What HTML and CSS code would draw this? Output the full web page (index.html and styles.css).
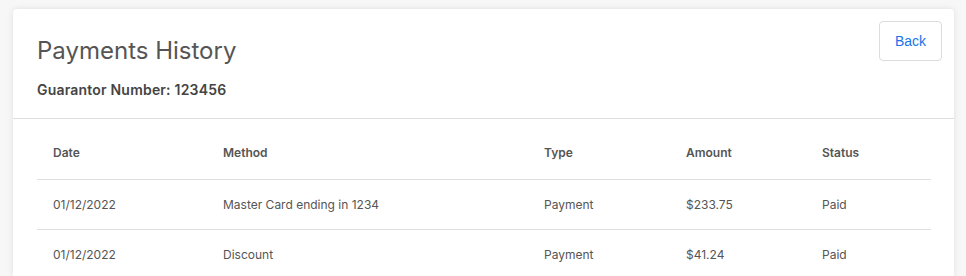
FILE: index.html
```html
<!DOCTYPE html>
<html>
<head>
<meta charset="utf-8">
<link rel="stylesheet" href="styles.css">
</head>
<body>
<div class="card">
  <div class="card-header">
    <div class="heading">
      <h1 class="title">Payments History</h1>
      <div class="subtitle">Guarantor Number: 123456</div>
    </div>
    <button class="back-btn">Back</button>
  </div>
  <div class="card-body">
    <table class="history">
      <thead>
        <tr><th class="c-date">Date</th><th class="c-method">Method</th><th class="c-type">Type</th><th class="c-amount">Amount</th><th class="c-status">Status</th></tr>
      </thead>
      <tbody>
        <tr><td>01/12/2022</td><td>Master Card ending in 1234</td><td>Payment</td><td>$233.75</td><td>Paid</td></tr>
        <tr><td>01/12/2022</td><td>Discount</td><td>Payment</td><td>$41.24</td><td>Paid</td></tr>
      </tbody>
    </table>
  </div>
</div>
</body>
</html>
```

FILE: styles.css
```css
html, body {
  margin: 0;
  padding: 0;
  background: #f7f7f7;
  font-family: "Inter", "Noto Sans", sans-serif;
  color: #555;
}
body {
  padding: 9px 12px 0 13px;
  overflow: hidden;
  height: 276px;
  box-sizing: border-box;
}
.card {
  background: #fff;
  border-radius: 4px 4px 0 0;
  box-shadow: 0 0 6px rgba(0, 0, 0, 0.10);
  height: 267px;
  overflow: hidden;
}
.card-header {
  display: flex;
  justify-content: space-between;
  align-items: flex-start;
  padding: 12px 12px 0 24px;
  height: 110px;
  box-sizing: border-box;
  border-bottom: 1px solid #dedede;
}
.heading {
  padding-top: 15px;
}
.title {
  margin: 0;
  font-size: 24px;
  font-weight: 400;
  line-height: 30px;
  color: #555;
}
.subtitle {
  margin-top: 15px;
  font-size: 14px;
  font-weight: 600;
  color: #444;
  line-height: 18px;
  letter-spacing: 0.2px;
}
.back-btn {
  width: 63px;
  height: 40px;
  background: #fff;
  border: 1px solid #dcdcdc;
  border-radius: 4px;
  color: #1a73e8;
  font-family: "Liberation Sans", Arial, sans-serif;
  font-size: 14px;
  padding: 0;
}
.card-body {
  padding: 11px 23px 0 24px;
}
.history {
  width: 100%;
  border-collapse: collapse;
  font-size: 12px;
}
.history th {
  text-align: left;
  font-weight: 600;
  color: #555;
  height: 45px;
  padding: 0 0 4px 16px;
  border-bottom: 1px solid #dedede;
}
.history td {
  height: 48px;
  padding: 0 0 1px 16px;
  color: #555;
  border-bottom: 1px solid #dedede;
}
.c-date { width: 154px; }
.c-method { width: 305px; }
.c-type { width: 126px; }
.c-amount { width: 120px; }
```
